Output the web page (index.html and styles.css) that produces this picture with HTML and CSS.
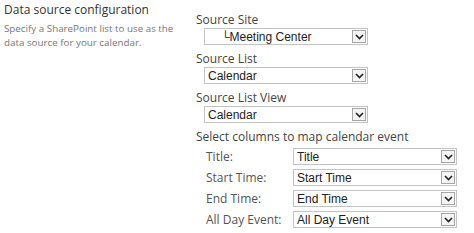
FILE: index.html
```html
<!DOCTYPE html>
<html lang="en">

<head>
    <meta charset="UTF-8">
    <title>Data source configuration</title>
    <link rel="stylesheet" href="styles.css">
</head>

<body>
    <div class="section">
        <!-- Left: description -->
        <div class="desc">
            <h3>Data source configuration</h3>
            <p>Specify a SharePoint list to use as the<br>data source for your calendar.</p>
        </div>

        <!-- Right: fields -->
        <div class="fields">
            <div class="field-label">Source Site</div>
            <div class="dropdown">
                <span class="value indent">&#9492;Meeting Center</span>
                <span class="arrow"><svg width="9" height="6" viewBox="0 0 9 6"><path d="M1 1 L4.5 4.5 L8 1" fill="none" stroke="#222" stroke-width="1.6"/></svg></span>
            </div>

            <div class="field-label">Source List</div>
            <div class="dropdown">
                <span class="value">Calendar</span>
                <span class="arrow"><svg width="9" height="6" viewBox="0 0 9 6"><path d="M1 1 L4.5 4.5 L8 1" fill="none" stroke="#222" stroke-width="1.6"/></svg></span>
            </div>

            <div class="field-label">Source List View</div>
            <div class="dropdown">
                <span class="value">Calendar</span>
                <span class="arrow"><svg width="9" height="6" viewBox="0 0 9 6"><path d="M1 1 L4.5 4.5 L8 1" fill="none" stroke="#222" stroke-width="1.6"/></svg></span>
            </div>

            <div class="field-label">Select columns to map calendar event</div>
            <div class="mapping">
                <div class="map-row">
                    <span class="map-label">Title:</span>
                    <div class="dropdown small">
                        <span class="value">Title</span>
                        <span class="arrow"><svg width="9" height="6" viewBox="0 0 9 6"><path d="M1 1 L4.5 4.5 L8 1" fill="none" stroke="#222" stroke-width="1.6"/></svg></span>
                    </div>
                </div>
                <div class="map-row">
                    <span class="map-label">Start Time:</span>
                    <div class="dropdown small">
                        <span class="value">Start Time</span>
                        <span class="arrow"><svg width="9" height="6" viewBox="0 0 9 6"><path d="M1 1 L4.5 4.5 L8 1" fill="none" stroke="#222" stroke-width="1.6"/></svg></span>
                    </div>
                </div>
                <div class="map-row">
                    <span class="map-label">End Time:</span>
                    <div class="dropdown small">
                        <span class="value">End Time</span>
                        <span class="arrow"><svg width="9" height="6" viewBox="0 0 9 6"><path d="M1 1 L4.5 4.5 L8 1" fill="none" stroke="#222" stroke-width="1.6"/></svg></span>
                    </div>
                </div>
                <div class="map-row">
                    <span class="map-label">All Day Event:</span>
                    <div class="dropdown small">
                        <span class="value">All Day Event</span>
                        <span class="arrow"><svg width="9" height="6" viewBox="0 0 9 6"><path d="M1 1 L4.5 4.5 L8 1" fill="none" stroke="#222" stroke-width="1.6"/></svg></span>
                    </div>
                </div>
            </div>
        </div>
    </div>
</body>

</html>
```

FILE: styles.css
```css
body {
    margin: 0;
    background: #fff;
    font-family: "Open Sans", "Noto Sans", sans-serif;
    color: #444;
}

.section {
    display: flex;
}

.desc {
    width: 192px;
    padding-left: 4px;
    padding-top: 2px;
}

.desc h3 {
    margin: 0;
    font-size: 12px;
    font-weight: normal;
    line-height: 15px;
    color: #333;
}

.desc p {
    margin: 5px 0 0;
    font-size: 9.8px;
    line-height: 14px;
    color: #777;
}

.fields {
    padding-top: 12px;
}

.field-label {
    font-size: 12px;
    line-height: 15px;
    color: #444;
    margin-bottom: 1px;
}

.dropdown {
    display: flex;
    align-items: center;
    justify-content: space-between;
    width: 162px;
    height: 15px;
    margin: 0 0 6px 8px;
    border: 1px solid #c3c3c3;
    background: #fff;
    font-family: "Liberation Sans", Arial, sans-serif;
    font-size: 12px;
    color: #222;
}

.dropdown .value {
    padding-left: 3px;
    white-space: nowrap;
}

.dropdown .value.indent {
    padding-left: 16px;
}

.arrow {
    display: flex;
    align-items: center;
    justify-content: center;
    width: 12px;
    height: 11px;
    margin-right: 1px;
    border: 1px solid #a6a6a6;
    background: #f4f4f4;
}

.mapping {
    padding-left: 10px;
    padding-top: 3px;
}

.map-row {
    display: flex;
    align-items: center;
    margin-bottom: 4px;
}

.map-label {
    width: 87px;
    font-size: 12px;
    line-height: 15px;
    color: #555;
    white-space: nowrap;
}

.dropdown.small {
    margin: 0;
}
```
